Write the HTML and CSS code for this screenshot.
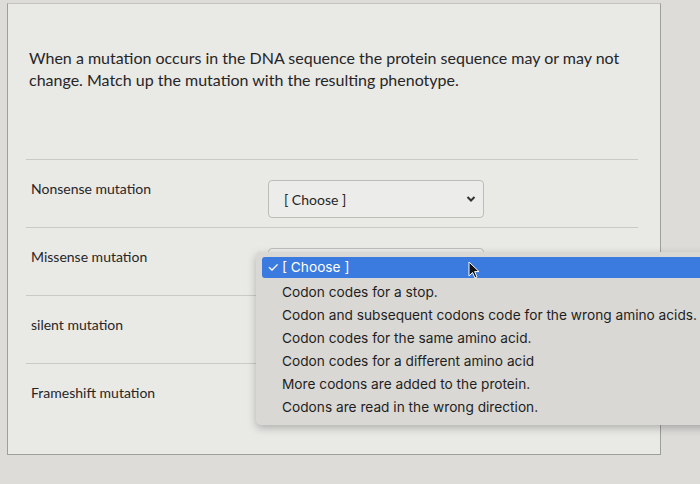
FILE: index.html
```html
<!DOCTYPE html>
<html>
<head>
<meta charset="utf-8">
<link rel="stylesheet" href="styles.css">
</head>
<body>
<div class="card">
  <p class="question">When a mutation occurs in the DNA sequence the protein sequence may or may not change. Match up the mutation with the resulting phenotype.</p>
  <div class="rows">
    <div class="row">
      <div class="label">Nonsense mutation</div>
      <div class="select"><span>[ Choose ]</span>
        <svg class="chev" width="10" height="8" viewBox="0 0 10 8"><path d="M1.5 2 L5 5.5 L8.5 2" fill="none" stroke="#333" stroke-width="2"/></svg>
      </div>
    </div>
    <div class="row">
      <div class="label">Missense mutation</div>
      <div class="select"></div>
    </div>
    <div class="row">
      <div class="label">silent mutation</div>
      <div class="select"></div>
    </div>
    <div class="row">
      <div class="label">Frameshift mutation</div>
      <div class="select"></div>
    </div>
  </div>
</div>
<div class="menu">
  <div class="item active"><span class="check">✓</span>[ Choose ]
    <svg class="cursor" width="12" height="18" viewBox="0 0 12 18"><path d="M1 1 L1 15 L4.5 11.5 L7 17 L9 16 L6.6 10.6 L11 10.6 Z" fill="#111" stroke="#fff" stroke-width="1"/></svg>
  </div>
  <div class="item">Codon codes for a stop.</div>
  <div class="item">Codon and subsequent codons code for the wrong amino acids.</div>
  <div class="item">Codon codes for the same amino acid.</div>
  <div class="item">Codon codes for a different amino acid</div>
  <div class="item">More codons are added to the protein.</div>
  <div class="item">Codons are read in the wrong direction.</div>
</div>
</body>
</html>
```

FILE: styles.css
```css
html, body {
  margin: 0;
  padding: 0;
}
body {
  width: 700px;
  height: 484px;
  overflow: hidden;
  background: #dddcd9;
  font-family: Lato, "Open Sans", sans-serif;
  color: #262626;
  position: relative;
}
.card {
  margin: 3px 0 0 7px;
  width: 632px;
  height: 450px;
  padding: 0 2px 0 18px;
  border: 1px solid #9e9e9b;
  border-top-color: #c4c4c1;
  background: #e9e9e6;
}
.question {
  margin: 0;
  padding: 43px 0 0 3px;
  font-size: 16px;
  line-height: 22px;
  width: 612px;
  height: 112px;
}
.rows {
  width: 612px;
}
.row {
  height: 67px;
  border-top: 1px solid #c9c9c6;
  display: flex;
  align-items: flex-start;
}
.label {
  width: 237px;
  padding: 19px 0 0 5px;
  font-size: 14px;
  line-height: 20px;
}
.select {
  margin-top: 20px;
  width: 192px;
  height: 36px;
  border: 1px solid #bcbcb9;
  border-radius: 4px;
  background: #ececea;
  display: flex;
  align-items: center;
  justify-content: space-between;
  padding: 0 7px 0 15px;
  font-size: 14px;
}
.chev {
  display: block;
}
.menu {
  position: absolute;
  left: 256px;
  top: 252px;
  width: 460px;
  height: 168px;
  padding-top: 5px;
  background: #d9d8d5;
  border-radius: 5px;
  box-shadow: 0 3px 8px rgba(0,0,0,0.25);
  font-family: Inter, "Noto Sans", sans-serif;
  font-size: 13.7px;
  color: #1e1e1e;
}
.item {
  height: 23px;
  line-height: 23px;
  padding-left: 26px;
  white-space: nowrap;
}
.item.active {
  position: relative;
  margin-left: 6px;
  padding-left: 20px;
  height: 21px;
  line-height: 21px;
  margin-bottom: 3px;
  background: #3b7ade;
  color: #fff;
  border-radius: 3px 0 0 3px;
}
.check {
  position: absolute;
  left: 5px;
  top: 0;
}
.cursor {
  position: absolute;
  left: 206px;
  top: 4px;
}
```
